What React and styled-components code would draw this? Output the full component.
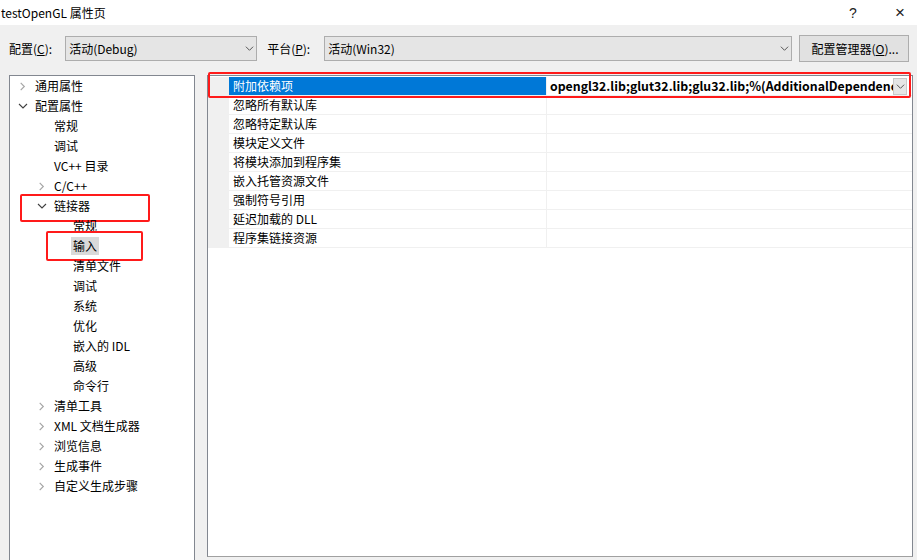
import React from 'react';
import styled, { createGlobalStyle } from 'styled-components';

const Global = createGlobalStyle`
  html, body { margin: 0; padding: 0; background: #f0f0f0; }
  * { box-sizing: border-box; }
`;

const Window = styled.div`
  width: 917px;
  height: 560px;
  overflow: hidden;
  background: #f0f0f0;
  font-family: "Noto Sans CJK SC", "Microsoft YaHei", sans-serif;
  font-size: 12px;
  color: #000;
  display: flex;
  flex-direction: column;
`;

const TitleBar = styled.div`
  height: 25px;
  background: #fff;
  display: flex;
  align-items: center;
  padding-left: 1px;
  padding-top: 1px;
`;

const Title = styled.div`
  flex: 1;
  font-size: 12px;
  line-height: 16px;
`;

const TitleButton = styled.div`
  width: ${p => p.w}px;
  margin-right: ${p => p.gap || 0}px;
  text-align: center;
  font-family: "Liberation Sans", sans-serif;
  font-size: ${p => p.size}px;
  color: #222;
  line-height: 16px;
`;

const Toolbar = styled.div`
  height: 45px;
  display: flex;
  align-items: center;
  padding: 0 8px 0 9px;
  margin-top: 1px;
`;

const Label = styled.span`
  line-height: 16px;
  margin-right: ${p => p.gap}px;
  u { text-decoration: underline; }
`;

const Select = styled.div`
  width: ${p => p.w}px;
  height: 25px;
  background: #e5e5e5;
  border: 1px solid #adadad;
  display: flex;
  align-items: center;
  padding: 0 2px 0 3px;
  margin-right: ${p => p.gap}px;
  span { flex: 1; line-height: 16px; }
`;

const Button = styled.div`
  width: 110px;
  height: 27px;
  margin-left: auto;
  background: #e1e1e1;
  border: 1px solid #adadad;
  display: flex;
  align-items: center;
  justify-content: center;
  line-height: 16px;
  padding-left: 2px;
`;

const Main = styled.div`
  flex: 1;
  display: flex;
  align-items: flex-start;
  padding: 4px 0 0 9px;
  min-height: 0;
`;

const Tree = styled.div`
  width: 186px;
  height: 500px;
  flex-shrink: 0;
  background: #fff;
  border: 1px solid #828790;
  margin-right: 12px;
`;

const TreeItem = styled.div`
  position: relative;
  height: 20px;
  display: flex;
  align-items: center;
  padding-left: ${p => 6 + p.level * 19}px;
  white-space: nowrap;
  ${p => p.marked && `
    &::after {
      content: '';
      position: absolute;
      left: ${p.marked.l}px;
      top: ${p.marked.t}px;
      width: ${p.marked.w}px;
      height: ${p.marked.h}px;
      border: 2.5px solid #ff1a1a;
      border-radius: 2px;
    }
  `}
`;

const Arrow = styled.span`
  width: 19px;
  height: 20px;
  display: flex;
  align-items: center;
  padding-left: 2px;
  flex-shrink: 0;
`;

const ItemText = styled.span`
  line-height: 16px;
  padding: 1px 2px;
  margin-left: -2px;
  background: ${p => (p.active ? '#d9d9d9' : 'transparent')};
`;

const Right = styled.div`
  width: 706px;
  flex-shrink: 0;
  display: flex;
  flex-direction: column;
`;

const GridPanel = styled.div`
  position: relative;
  flex: none;
  height: 482px;
  background: #fff;
  border: 1px solid #828790;
  border-bottom-color: #a0a0a0;
  padding-top: 1px;
`;

const Row = styled.div`
  display: flex;
  height: 19px;
  border-bottom: 1px solid #f0f0f0;
`;

const Gutter = styled.div`
  width: 21px;
  background: #f0f0f0;
`;

const NameCell = styled.div`
  width: 318px;
  padding-left: 4px;
  display: flex;
  align-items: center;
  line-height: 16px;
  background: ${p => (p.selected ? '#0078d7' : '#fff')};
  color: ${p => (p.selected ? '#fff' : '#000')};
  border-right: 1px solid #f0f0f0;
`;

const ValueCell = styled.div`
  flex: 1;
  display: flex;
  align-items: center;
  padding-left: 3px;
  min-width: 0;
  margin-right: 5px;
`;

const ValueText = styled.div`
  flex: 1;
  overflow: hidden;
  white-space: nowrap;
  font-weight: bold;
  font-size: 12.3px;
  line-height: 16px;
`;

const DropButton = styled.div`
  width: 14px;
  height: 17px;
  background: #e5e5e5;
  border: 1px solid #c8c8c8;
  display: flex;
  align-items: center;
  justify-content: center;
`;

const RedBox = styled.div`
  position: absolute;
  left: 0px;
  top: -4px;
  width: 703px;
  height: 26px;
  border: 2.5px solid #ff1a1a;
  border-radius: 2px;
`;

const Description = styled.div`
  flex: none;
  height: 10px;
  margin-top: 3px;
  background: #fff;
  border: 1px solid #a0a0a0;
`;

const Chevron = ({ dir = 'down', color = '#555', size = 9 }) => (
  <svg width={size} height={size} viewBox="0 0 10 10">
    {dir === 'down' ? (
      <polyline points="1,3 5,7 9,3" fill="none" stroke={color} strokeWidth="1.1" />
    ) : (
      <polyline points="3,1 7,5 3,9" fill="none" stroke={color} strokeWidth="1.3" />
    )}
  </svg>
);

const tree = [
  { t: '通用属性', level: 0, arrow: 'right' },
  { t: '配置属性', level: 0, arrow: 'down' },
  { t: '常规', level: 1 },
  { t: '调试', level: 1 },
  { t: 'VC++ 目录', level: 1 },
  { t: 'C/C++', level: 1, arrow: 'right' },
  { t: '链接器', level: 1, arrow: 'down', marked: { l: 10, t: -2, w: 126, h: 24 } },
  { t: '常规', level: 2 },
  { t: '输入', level: 2, active: true, marked: { l: 36, t: -5, w: 93, h: 26 } },
  { t: '清单文件', level: 2 },
  { t: '调试', level: 2 },
  { t: '系统', level: 2 },
  { t: '优化', level: 2 },
  { t: '嵌入的 IDL', level: 2 },
  { t: '高级', level: 2 },
  { t: '命令行', level: 2 },
  { t: '清单工具', level: 1, arrow: 'right' },
  { t: 'XML 文档生成器', level: 1, arrow: 'right' },
  { t: '浏览信息', level: 1, arrow: 'right' },
  { t: '生成事件', level: 1, arrow: 'right' },
  { t: '自定义生成步骤', level: 1, arrow: 'right' },
];

const rows = [
  '附加依赖项',
  '忽略所有默认库',
  '忽略特定默认库',
  '模块定义文件',
  '将模块添加到程序集',
  '嵌入托管资源文件',
  '强制符号引用',
  '延迟加载的 DLL',
  '程序集链接资源',
];

export default function App() {
  return (
    <Window>
      <Global />
      <TitleBar>
        <Title>testOpenGL 属性页</Title>
        <TitleButton w={30} size={14} gap={15}>?</TitleButton>
        <TitleButton w={34} size={17}>×</TitleButton>
      </TitleBar>
      <Toolbar>
        <Label gap={13}>配置(<u>C</u>):</Label>
        <Select w={192} gap={10}>
          <span>活动(Debug)</span>
          <Chevron />
        </Select>
        <Label gap={14}>平台(<u>P</u>):</Label>
        <Select w={468} gap={0}>
          <span>活动(Win32)</span>
          <Chevron />
        </Select>
        <Button>配置管理器(<u>O</u>)...</Button>
      </Toolbar>
      <Main>
        <Tree>
          {tree.map((n, i) => (
            <TreeItem key={i} level={n.level} marked={n.marked}>
              <Arrow>
                {n.arrow === 'right' && <Chevron dir="right" color="#a6a6a6" />}
                {n.arrow === 'down' && <Chevron dir="down" color="#404040" size={10} />}
              </Arrow>
              <ItemText active={n.active}>{n.t}</ItemText>
            </TreeItem>
          ))}
        </Tree>
        <Right>
          <GridPanel>
            {rows.map((r, i) => (
              <Row key={i}>
                <Gutter />
                <NameCell selected={i === 0}>{r}</NameCell>
                <ValueCell>
                  {i === 0 && (
                    <>
                      <ValueText>opengl32.lib;glut32.lib;glu32.lib;%(AdditionalDependencies)</ValueText>
                      <DropButton>
                        <Chevron size={9} />
                      </DropButton>
                    </>
                  )}
                </ValueCell>
              </Row>
            ))}
            <RedBox />
          </GridPanel>
          <Description />
        </Right>
      </Main>
    </Window>
  );
}
